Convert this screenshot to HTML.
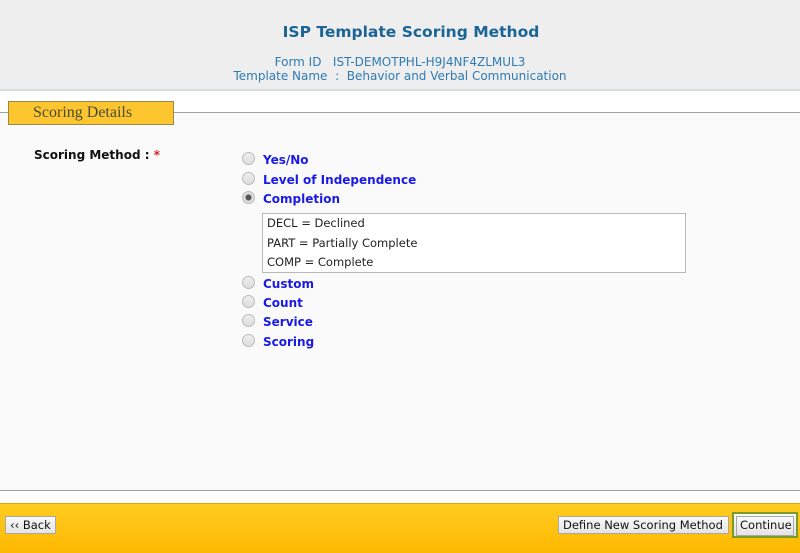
<!DOCTYPE html>
<html><head><style>
body{margin:0;width:800px;height:552px;overflow:hidden;background:#fafafa;font-family:"DejaVu Sans",Verdana,sans-serif;position:relative}
.hdr{position:absolute;left:0;top:0;width:800px;height:89px;background:#eeeeee;border-bottom:2px solid #d5dde3}
.t{position:absolute;top:23px;left:0;width:822px;text-align:center;color:#1a6496;font-weight:bold;font-size:15.5px}
.s{position:absolute;left:0;width:800px;text-align:center;color:#2e7bb4;font-size:12px}
.white{position:absolute;left:0;top:91px;width:800px;height:22px;background:#fff}
.line{position:absolute;left:0;top:112px;width:800px;height:1px;background:#a0a0a0}
.leg{position:absolute;left:8px;top:101px;background:#fdc62f;border:1px solid #9a8a4a;font-family:"Liberation Serif",serif;font-size:16px;color:#4a4a3a;line-height:22px;padding-left:24px;box-sizing:border-box;width:166px;height:24px}
.lbl{position:absolute;left:34px;top:148px;font-weight:bold;font-size:12px;color:#111}
.lbl span{color:#e02020}
.r{position:absolute;left:242px;font-size:12px;font-weight:bold;color:#1a1ae6}
.r i{position:absolute;left:0;top:0;width:11px;height:11px;border-radius:50%;border:1px solid #bbb;background:linear-gradient(#eee,#ddd)}
.r b{position:absolute;left:21px;top:1px;white-space:nowrap}
.box{position:absolute;left:262px;top:213px;border:1px solid #b8b8b8;background:#fff;font-size:11.5px;color:#222;line-height:19.5px;padding-left:4px;box-sizing:border-box;width:424px;height:60px}
.bl{position:absolute;left:0;top:490px;width:800px;height:1px;background:#a0a0a0}
.bw{position:absolute;left:0;top:491px;width:800px;height:12px;background:#fff}
.ft{position:absolute;left:0;top:503px;width:800px;height:49px;background:linear-gradient(#ffcc22,#ffb800);border-top:1px solid #e0a800}
.btn{position:absolute;top:516px;height:18px;background:linear-gradient(#fafafa,#e4e4e4);border:1px solid #a8a8a8;font-size:11.5px;color:#111;line-height:17px;padding:0 4px;box-sizing:border-box;white-space:nowrap}
</style></head><body>
<div class="hdr">
<div class="t">ISP Template Scoring Method</div>
<div class="s" style="top:55px">Form ID &nbsp; IST-DEMOTPHL-H9J4NF4ZLMUL3</div>
<div class="s" style="top:69px">Template Name &nbsp;: &nbsp;Behavior and Verbal Communication</div>
</div>
<div class="white"></div>
<div class="line"></div>
<div class="leg">Scoring Details</div>
<div class="lbl">Scoring Method : <span>*</span></div>
<div class="r" style="top:152px"><i></i><b>Yes/No</b></div>
<div class="r" style="top:172px"><i></i><b>Level of Independence</b></div>
<div class="r" style="top:191px"><i style="background:radial-gradient(circle,#555 0 2.5px,#ddd 3.5px)"></i><b>Completion</b></div>
<div class="box">DECL = Declined<br>PART = Partially Complete<br>COMP = Complete</div>
<div class="r" style="top:276px"><i></i><b>Custom</b></div>
<div class="r" style="top:295px"><i></i><b>Count</b></div>
<div class="r" style="top:314px"><i></i><b>Service</b></div>
<div class="r" style="top:334px"><i></i><b>Scoring</b></div>
<div class="bl"></div><div class="bw"></div>
<div class="ft"></div>
<div class="btn" style="left:5px;width:51px">‹‹ Back</div>
<div class="btn" style="left:558px;width:171px">Define New Scoring Method</div>
<div class="btn" style="left:732px;top:512px;height:26px;width:66px;border:2px solid #7a9a2a;padding:2px"><div style="border:1px solid #a8a8a8;height:18px;line-height:17px;padding:0 3px;background:linear-gradient(#fafafa,#e4e4e4)">Continue</div></div>
</body></html>
